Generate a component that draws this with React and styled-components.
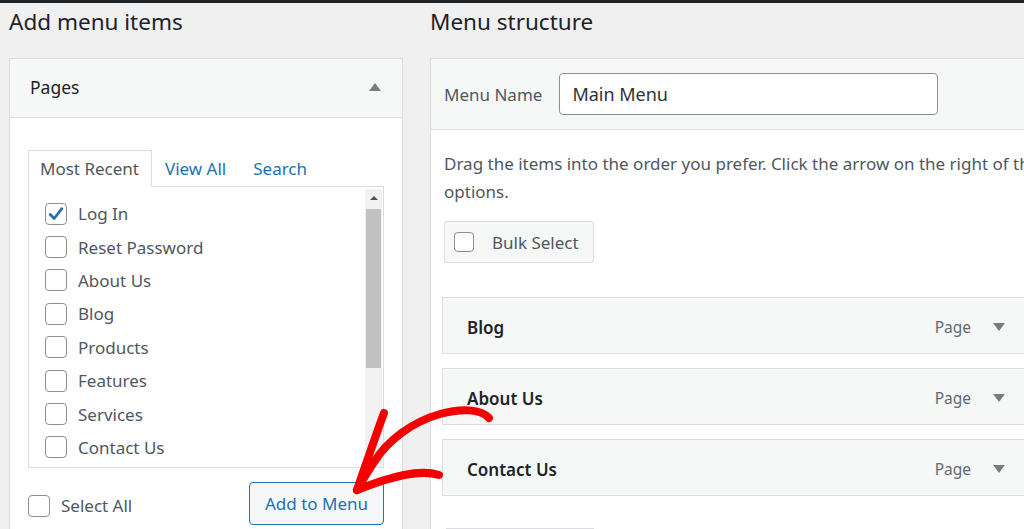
import React from 'react'
import styled, { createGlobalStyle } from 'styled-components'

const pages = [
  'Log In',
  'Reset Password',
  'About Us',
  'Blog',
  'Products',
  'Features',
  'Services',
  'Contact Us',
]

const menuItems = ['Blog', 'About Us', 'Contact Us']

function Checkbox({ checked, size }) {
  return (
    <Box size={size}>
      {checked && (
        <svg width="18" height="18" viewBox="0 0 20 20">
          <path
            d="M3.5 10.5 L8 15 L16.5 4"
            fill="none"
            stroke="#2271b1"
            strokeWidth="3"
            strokeLinecap="round"
            strokeLinejoin="round"
          />
        </svg>
      )}
    </Box>
  )
}

function App() {
  return (
    <Page>
      <GlobalStyle />
      <TopBar />
      <Columns>
        <Column>
          <Heading>Add menu items</Heading>
          <Panel>
            <PanelHeader>
              <PanelTitle>Pages</PanelTitle>
              <Triangle up />
            </PanelHeader>
            <PanelBody>
              <Tabs>
                <Tab active>Most Recent</Tab>
                <Tab>View All</Tab>
                <Tab>Search</Tab>
              </Tabs>
              <ListBox>
                <List>
                  {pages.map((p, i) => (
                    <ListRow key={i}>
                      <Checkbox checked={i === 0} />
                      <span>{p}</span>
                    </ListRow>
                  ))}
                </List>
                <Scrollbar>
                  <ScrollArrow />
                  <ScrollThumb />
                </Scrollbar>
              </ListBox>
              <Actions>
                <SelectAll>
                  <Checkbox />
                  <span>Select All</span>
                </SelectAll>
                <AddButton>Add to Menu</AddButton>
              </Actions>
            </PanelBody>
          </Panel>
        </Column>

        <Column>
          <Heading>Menu structure</Heading>
          <WidePanel>
            <NameBar>
              <NameLabel>Menu Name</NameLabel>
              <NameInput defaultValue="Main Menu" />
            </NameBar>
            <StructureBody>
              <Help>
                Drag the items into the order you prefer. Click the arrow on the right of the item to reveal additional configuration
                options.
              </Help>
              <BulkButton>
                <Checkbox size={20} />
                <span>Bulk Select</span>
              </BulkButton>
              <Items>
                {menuItems.map((m) => (
                  <Item key={m}>
                    <ItemTitle>{m}</ItemTitle>
                    <ItemType>Page</ItemType>
                    <Triangle />
                  </Item>
                ))}
              </Items>
              <NextBox />
            </StructureBody>
          </WidePanel>
        </Column>
      </Columns>

      <Scribble width="1024" height="529" viewBox="0 0 1024 529">
        <g
          fill="none"
          stroke="#f50000"
          strokeWidth="8"
          strokeLinecap="round"
          strokeLinejoin="round"
        >
          <path d="M489 418 C481 409, 462 408, 440 414 C412 422, 388 440, 374 462 C367 473, 361 482, 357 490" />
          <path d="M384 413 C377 432, 368 458, 357 490" />
          <path d="M439 475 C420 469, 392 476, 357 490" />
        </g>
      </Scribble>
    </Page>
  )
}

const GlobalStyle = createGlobalStyle`
  body {
    margin: 0;
    background: #f0f0f1;
    font-family: "Noto Sans", "Open Sans", sans-serif;
    color: #1d2327;
  }
`

const Page = styled.div`
  position: relative;
  width: 1024px;
  height: 529px;
  overflow: hidden;
  background: #f0f0f1;
`

const TopBar = styled.div`
  height: 3px;
  background: #1d2327;
`

const Columns = styled.div`
  display: grid;
  grid-template-columns: 394px 700px;
  column-gap: 27px;
  padding-left: 9px;
`

const Column = styled.div`
  display: flex;
  flex-direction: column;
`

const Heading = styled.h2`
  margin: 0;
  height: 55px;
  padding-top: 4px;
  box-sizing: border-box;
  font-size: 22.5px;
  font-weight: 400;
  color: #1d2327;
  line-height: 30px;
`

const Panel = styled.div`
  background: #fff;
  border: 1px solid #dcdcde;
  height: 500px;
`

const PanelHeader = styled.div`
  display: flex;
  align-items: center;
  justify-content: space-between;
  height: 58px;
  padding: 0 21px 0 20px;
  background: #f6f7f7;
  border-bottom: 1px solid #dcdcde;
`

const PanelTitle = styled.h3`
  margin: 0 0 2px;
  font-size: 17.5px;
  font-weight: 400;
  color: #1d2327;
`

const Triangle = styled.span`
  width: 0;
  height: 0;
  border-left: 6px solid transparent;
  border-right: 6px solid transparent;
  ${(p) =>
    p.up
      ? 'border-bottom: 8px solid #787c82; margin-bottom: 3px;'
      : 'border-top: 8px solid #787c82;'}
`

const PanelBody = styled.div`
  padding: 32px 18px 0 18px;
`

const Tabs = styled.div`
  display: flex;
  align-items: flex-end;
  position: relative;
  z-index: 1;
  margin-bottom: -1px;
`

const Tab = styled.div`
  height: 35px;
  display: flex;
  align-items: center;
  padding: 0 12px 0 11px;
  margin-right: ${(p) => (p.active ? '1px' : '2px')};
  font-size: 17px;
  color: ${(p) => (p.active ? '#50575e' : '#2271b1')};
  background: ${(p) => (p.active ? '#fff' : 'transparent')};
  border: 1px solid ${(p) => (p.active ? '#dcdcde' : 'transparent')};
  border-bottom: 1px solid ${(p) => (p.active ? '#fff' : 'transparent')};
`

const ListBox = styled.div`
  display: flex;
  justify-content: space-between;
  height: 282px;
  border: 1px solid #dcdcde;
  box-sizing: border-box;
`

const List = styled.div`
  padding: 10px 0 0 16px;
`

const ListRow = styled.label`
  display: flex;
  align-items: center;
  gap: 11px;
  height: 33.4px;
  font-size: 17px;
  color: #50575e;
`

const Box = styled.span`
  width: ${(p) => p.size || 22}px;
  height: ${(p) => p.size || 22}px;
  box-sizing: border-box;
  flex: none;
  display: flex;
  align-items: center;
  justify-content: center;
  background: #fff;
  border: 1px solid #8c8f94;
  border-radius: 4px;
`

const Scrollbar = styled.div`
  width: 17px;
  margin: 2px 1px 0 0;
  background: #f1f1f1;
  display: flex;
  flex-direction: column;
  align-items: center;
`

const ScrollArrow = styled.span`
  margin-top: 7px;
  width: 0;
  height: 0;
  border-left: 4px solid transparent;
  border-right: 4px solid transparent;
  border-bottom: 4px solid #505050;
`

const ScrollThumb = styled.div`
  margin-top: 9px;
  width: 15px;
  height: 159px;
  background: #c1c1c1;
`

const Actions = styled.div`
  display: flex;
  align-items: center;
  justify-content: space-between;
  margin-top: 14px;
`

const SelectAll = styled.label`
  display: flex;
  align-items: center;
  gap: 11px;
  font-size: 17px;
  color: #50575e;
  margin-top: 4px;
`

const AddButton = styled.button`
  height: 43px;
  padding: 0 15px;
  font-family: inherit;
  font-size: 17px;
  color: #2271b1;
  background: #f6f7f7;
  border: 1px solid #2271b1;
  border-radius: 4px;
`

const WidePanel = styled.div`
  background: #fff;
  border: 1px solid #dcdcde;
  height: 500px;
`

const NameBar = styled.div`
  display: flex;
  align-items: center;
  height: 70px;
  padding-left: 13px;
  background: #f6f7f7;
  border-bottom: 1px solid #dcdcde;
`

const NameLabel = styled.label`
  font-size: 17px;
  color: #50575e;
  margin-right: 17px;
`

const NameInput = styled.input`
  width: 379px;
  height: 42px;
  box-sizing: border-box;
  padding: 0 12px;
  font-family: inherit;
  font-size: 18px;
  color: #2c3338;
  background: #fff;
  border: 1px solid #8c8f94;
  border-radius: 4px;
  outline: none;
`

const StructureBody = styled.div`
  padding: 20px 0 0 13px;
`

const Help = styled.p`
  margin: 0;
  width: 930px;
  height: 56px;
  font-size: 17px;
  line-height: 28px;
  color: #50575e;
`

const BulkButton = styled.label`
  display: flex;
  align-items: center;
  gap: 18px;
  width: 150px;
  height: 42px;
  box-sizing: border-box;
  margin-top: 15px;
  padding-left: 9px;
  font-size: 17px;
  color: #50575e;
  background: #f6f7f7;
  border: 1px solid #dcdcde;
  border-radius: 3px;
`

const Items = styled.div`
  display: flex;
  flex-direction: column;
  gap: 14px;
  margin: 34px 0 0 -2px;
`

const Item = styled.div`
  display: flex;
  align-items: center;
  width: 600px;
  height: 57px;
  box-sizing: border-box;
  padding: 3px 36px 0 24px;
  background: #f6f7f7;
  border: 1px solid #dcdcde;
`

const ItemTitle = styled.span`
  flex: 1;
  font-size: 17px;
  font-weight: 600;
  color: #1d2327;
`

const ItemType = styled.span`
  font-size: 15.5px;
  color: #646970;
  margin-right: 22px;
`

const NextBox = styled.div`
  width: 146px;
  height: 40px;
  margin: 32px 0 0 2px;
  border: 1px solid #dcdcde;
  background: #f6f7f7;
`

const Scribble = styled.svg`
  position: absolute;
  top: 0;
  left: 0;
  pointer-events: none;
`

export default App
